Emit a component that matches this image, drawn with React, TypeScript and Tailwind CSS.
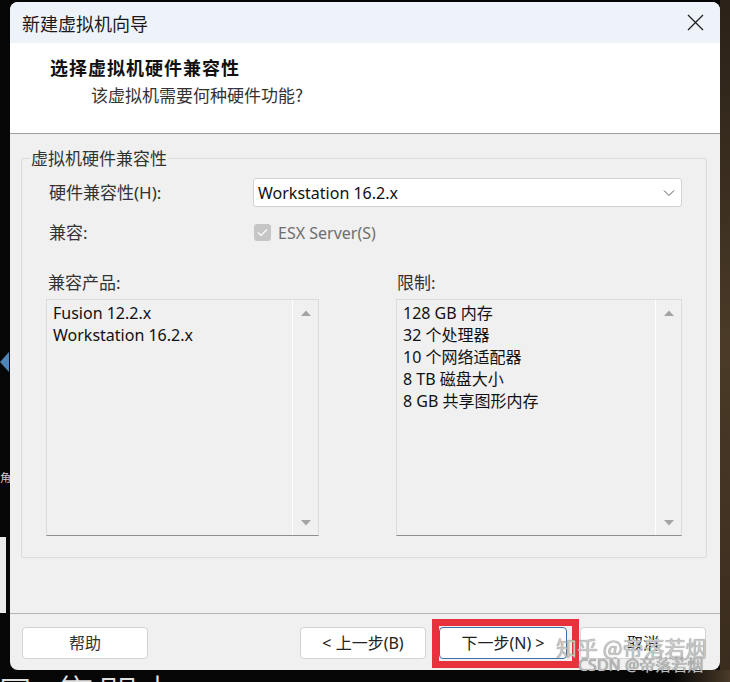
import React from "react";

function UpArrow() {
  return (
    <svg width="12" height="8" viewBox="0 0 12 8">
      <path d="M1 7 L6 1.5 L11 7 Z" fill="#a4a4a4" />
    </svg>
  );
}
function DownArrow() {
  return (
    <svg width="12" height="8" viewBox="0 0 12 8">
      <path d="M1 1 L6 6.5 L11 1 Z" fill="#a4a4a4" />
    </svg>
  );
}

function ListBox({ items, width }: { items: string[]; width: string }) {
  return (
    <div className={`flex h-[237px] ${width} border border-[#dcdcdc] border-b-[#8e8e8e] bg-[#f0f0f0]`}>
      <div className="flex-1 pl-[6px] pt-[2px] text-[16px] leading-[22px] text-[#111]">
        {items.map((t) => (
          <div key={t}>{t}</div>
        ))}
      </div>
      <div className="flex w-[26px] flex-col items-center justify-between border-l border-[#ffffff] pt-[9px] pb-[8px]">
        <UpArrow />
        <DownArrow />
      </div>
    </div>
  );
}

export default function App() {
  return (
    <div className="relative flex h-[682px] w-[730px] overflow-hidden bg-[#060606] font-['Noto_Sans','Noto_Sans_CJK_SC',sans-serif]">
      {/* left backdrop strip */}
      <div className="relative w-[10px] shrink-0">
        <div className="absolute left-0 top-[352px] h-0 w-0 border-y-[10px] border-r-[9px] border-y-transparent border-r-[#4f86b8]" />
        <div className="absolute left-0 top-[472px] text-[11px] leading-none text-[#cfcfcf]">角</div>
        <div className="absolute left-0 top-[537px] h-[76px] w-[6px] bg-[#e9e9e9]" />
      </div>

      {/* window */}
      <div className="flex w-[710px] shrink-0 flex-col pt-[2px]">
        <div className="flex h-[668px] flex-col overflow-hidden rounded-[8px] bg-[#f0f0f0]">
          {/* title bar */}
          <div className="flex h-[41px] shrink-0 items-center justify-between bg-[#eef3f9] pl-[12px] pr-[16px]">
            <span className="font-['Noto_Sans_CJK_SC',sans-serif] text-[18px] leading-[24px] text-[#1a1a1a]">
              新建虚拟机向导
            </span>
            <svg width="17" height="17" viewBox="0 0 17 17">
              <path d="M1 1 L16 16 M16 1 L1 16" stroke="#1f1f1f" strokeWidth="1.3" />
            </svg>
          </div>

          {/* header */}
          <div className="h-[91px] shrink-0 border-b border-[#a0a0a0] bg-white pl-[40px] pt-[12px]">
            <div className="font-['Noto_Sans_CJK_SC',sans-serif] text-[18px] font-bold leading-[24px] tracking-[1px] text-[#111]">
              选择虚拟机硬件兼容性
            </div>
            <div className="mt-[4px] pl-[41px] font-['Noto_Sans_CJK_SC',sans-serif] text-[17px] leading-[24px] text-[#333]">
              该虚拟机需要何种硬件功能?
            </div>
          </div>

          {/* body */}
          <div className="flex-1 px-[11px] pt-[13px]">
            <fieldset className="w-[686px] rounded-[2px] border border-[#dcdcdc] px-[24px] pb-[21px]">
              <legend className="ml-[-16px] px-[1px] font-['Noto_Sans_CJK_SC',sans-serif] text-[17px] leading-[22px] text-[#333]">
                虚拟机硬件兼容性
              </legend>
              <div className="mt-[9px] flex h-[29px] items-center">
                <div className="w-[207px] pl-[3px] text-[17px] text-[#333]">硬件兼容性(H):</div>
                <div className="flex h-[29px] w-[429px] items-center justify-between rounded-[3px] border border-[#d2d2d2] bg-white pl-[4px] pr-[6px]">
                  <span className="text-[16px] text-[#111]">Workstation 16.2.x</span>
                  <svg width="12" height="8" viewBox="0 0 12 8">
                    <path d="M1 1.5 L6 6.5 L11 1.5" stroke="#555" strokeWidth="1" fill="none" />
                  </svg>
                </div>
              </div>
              <div className="mt-[11px] flex h-[29px] items-center">
                <div className="w-[208px] pl-[3px] text-[17px] text-[#333]">兼容:</div>
                <div className="flex h-[17px] w-[17px] items-center justify-center rounded-[3px] bg-[#c6c6c6]">
                  <svg width="11" height="9" viewBox="0 0 11 9">
                    <path d="M1 4.5 L4 7.5 L10 1.5" stroke="#fff" strokeWidth="1.2" fill="none" />
                  </svg>
                </div>
                <span className="ml-[7px] text-[16px] text-[#6e6e6e]">ESX Server(S)</span>
              </div>
              <div className="mt-[25px] flex gap-[77px]">
                <div className="flex flex-col">
                  <div className="h-[22px] pl-[2px] text-[17px] leading-[22px] text-[#333]">兼容产品:</div>
                  <div className="mt-[5px]">
                    <ListBox width="w-[273px]" items={["Fusion 12.2.x", "Workstation 16.2.x"]} />
                  </div>
                </div>
                <div className="flex flex-col">
                  <div className="h-[22px] pl-[1px] text-[17px] leading-[22px] text-[#333]">限制:</div>
                  <div className="mt-[5px]">
                    <ListBox
                      width="w-[286px]"
                      items={["128 GB 内存", "32 个处理器", "10 个网络适配器", "8 TB 磁盘大小", "8 GB 共享图形内存"]}
                    />
                  </div>
                </div>
              </div>
            </fieldset>
          </div>

          {/* footer */}
          <div className="flex h-[57px] shrink-0 items-start border-t border-[#b4b4b4] pl-[12px] pr-[14px] pt-[13px]">
            <button className="h-[32px] w-[126px] rounded-[4px] border border-[#d3d3d3] bg-white text-[16px] text-[#333]">
              帮助
            </button>
            <div className="flex-1" />
            <button className="h-[32px] w-[126px] rounded-[4px] border border-[#d3d3d3] bg-white text-[16px] text-[#222]">
              &lt; 上一步(B)
            </button>
            <div className="relative ml-[13px]">
              <button className="h-[32px] w-[128px] rounded-[4px] border border-[#3d6fa6] bg-white text-[16px] text-[#222]">
                下一步(N) &gt;
              </button>
              <div className="absolute left-[-7px] top-[-8px] h-[49px] w-[147px] border-[7px] border-[#e8323b]" />
            </div>
            <button className="ml-[13px] h-[32px] w-[126px] rounded-[4px] border border-[#d3d3d3] bg-white text-[16px] text-[#222]">
              取消
            </button>
          </div>
        </div>
      </div>

      {/* right backdrop strip */}
      <div className="w-[10px] shrink-0 bg-gradient-to-b from-[#2a2118] via-[#4a3a27] to-[#3a2c1e]" />

      {/* bottom backdrop text */}
      <div className="absolute left-[-6px] top-[672px] whitespace-nowrap font-['Noto_Sans_CJK_SC',sans-serif] text-[42px] font-light leading-none text-[#e0e0e0]">
        日 &nbsp;集朋力
      </div>
      <div className="absolute right-0 top-[670px] h-[12px] w-[60px] bg-gradient-to-r from-[#060606] to-[#4a3a28]" />

      {/* watermark */}
      <div className="absolute left-[556px] top-[634px] whitespace-nowrap font-['Noto_Sans_CJK_SC',sans-serif] text-[21px] leading-[26px] text-[#c9c9c9] [text-shadow:0_0_1px_#6a6a6a]">
        知乎 @帝落若烟
      </div>
      <div className="absolute left-[578px] top-[655px] whitespace-nowrap font-['Noto_Sans','Noto_Sans_CJK_SC',sans-serif] text-[16px] leading-[20px] text-[#bdbdbd] [text-shadow:0_0_1px_#555]">
        CSDN @帝落若烟
      </div>
    </div>
  );
}
